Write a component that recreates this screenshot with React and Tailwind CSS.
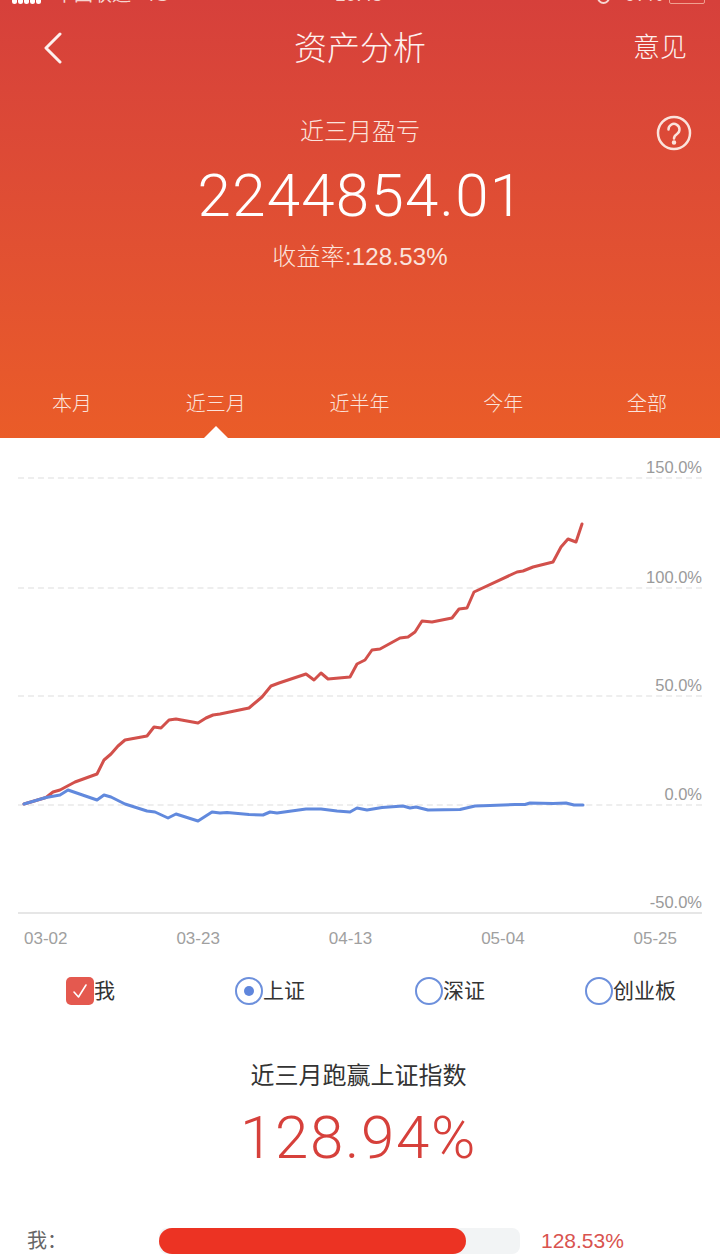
const red = '24,804 46,797.5 53,792 60,790 75,782 97,774 104,760 111,754 118,746 125,740 147,736 154,727 161,728 169,720 176,719 198,723 206,718 213,715 220,714 249,708 262,697 271,686 279,683 306,674 314,680 321,673 328,679 350,677 357,664 365,660 372,650 380,649 400,638 408,637 415,632 422,621 432,622 452,618 459,609 467,608 474,592 517,572 523,571 533,567 553,562 561,547 568,539 576,542 582,524';
const blue = '24,804 46,797.5 60,795 68,790 97,800 104,795 111,797 125,804 147,811 155,812 168,818 176,814 198,821 212,812 220,813 227,812.5 249,814.5 263,815 270,812 277,813 306,809 321,809 337,811 350,812 357,808 367,810 382,807.5 403,806 410,808 416,807 428,810 460,809.5 475,806 490,805.5 515,804.5 525,804.5 530,803 553,803.5 566,803 574,805 583,805';

const tabs = ['本月', '近三月', '近半年', '今年', '全部'];
const gridRows = [
  { label: '150.0%', h: 'h-[41px]' },
  { label: '100.0%', h: 'h-[110px]' },
  { label: '50.0%', h: 'h-[108px]' },
  { label: '0.0%', h: 'h-[109px]' },
];
const dates = ['03-02', '03-23', '04-13', '05-04', '05-25'];

function Radio({ label, checked, className }) {
  return (
    <div className={`flex items-center ${className}`}>
      <span className="w-[28px] h-[28px] rounded-full border-2 border-[#6d90dc] flex items-center justify-center">
        {checked && <span className="w-[10px] h-[10px] rounded-full bg-[#5f86dc]" />}
      </span>
      <span className="text-[21px] text-[#333]">{label}</span>
    </div>
  );
}

export default function App() {
  return (
    <div className="w-[720px] h-[1256px] overflow-hidden bg-white font-['Liberation_Sans','Noto_Sans_CJK_SC',sans-serif]">
      {/* header */}
      <div className="relative h-[438px] bg-gradient-to-b from-[#d6403b] to-[#ea5c28] text-white">
        {/* status bar, cut off by the top of the picture */}
        <div className="h-[4px] overflow-hidden flex items-end pl-[12px] text-[19px] text-[#f6d5d0]">
          <div className="w-[323px] flex items-end leading-none whitespace-nowrap">
            <span className="flex gap-[1px] w-[43px] h-[8px]">
              <span className="w-[5px] h-[8px] rounded-full bg-white" />
              <span className="w-[5px] h-[8px] rounded-full bg-white" />
              <span className="w-[5px] h-[8px] rounded-full bg-white" />
              <span className="w-[5px] h-[8px] rounded-full bg-white" />
              <span className="w-[5px] h-[8px] rounded-full bg-white" />
            </span>
            <span>中国联通</span>
            <span className="ml-[13px]">4G</span>
          </div>
          <span className="w-[262px] leading-none">10:45</span>
          <span className="w-[28px] leading-none">
            <span className="block w-[13px] h-[13px] rounded-full border-2 border-[#f6d5d0]" />
          </span>
          <span className="w-[44px] leading-none">97%</span>
          <span className="w-[36px] h-[10px] border border-[#f0a090] rounded-[2px]" />
        </div>
        <div className="h-[72px] grid grid-cols-[1fr_auto_1fr] items-center pt-[16px]">
          <svg className="ml-[42px]" width="22" height="32" viewBox="0 0 22 32" fill="none" stroke="#fdf0ee" strokeWidth="3" strokeLinecap="round" strokeLinejoin="round">
            <path d="M18 2 L4 16 L18 30" />
          </svg>
          <span className="text-[33px] leading-none font-light text-[#fdf0ee]">资产分析</span>
          <span className="justify-self-end mr-[33px] text-[27px] leading-none font-light text-[#fdf0ee]">意见</span>
        </div>
        <div className="relative mt-[39px] text-center">
          <div className="text-[24px] leading-[34px] font-light text-[#fbe3dc]">近三月盈亏</div>
          <svg className="absolute right-[28px] top-0" width="36" height="36" viewBox="0 0 36 36" fill="none" stroke="#fbe3dc" strokeWidth="2.5">
            <circle cx="18" cy="18" r="16" />
            <path d="M12.5 14.5 a5.5 5.5 0 1 1 8.5 4.5 c-2 1.3 -3 2.3 -3 4.5" strokeLinecap="round" />
            <circle cx="18" cy="27.5" r="1" fill="#fbe3dc" />
          </svg>
          <div className="mt-[13px] pl-[2px] font-['Roboto',sans-serif] font-light text-[60px] tracking-[1.3px] leading-[68px]">2244854.01</div>
          <div className="mt-[10px] text-[24px] leading-[34px] font-light tracking-[0.2px] text-[#fbe3dc]">收益率:128.53%</div>
        </div>
        <div className="absolute left-0 right-0 bottom-[18px] grid grid-cols-5 text-[20px] leading-[32px] font-light text-[#fbe3dc] text-center pr-[1px]">
          {tabs.map((t) => <span key={t}>{t}</span>)}
        </div>
        <span className="absolute left-[204px] bottom-0 w-0 h-0 border-l-[12px] border-r-[12px] border-b-[12px] border-l-transparent border-r-transparent border-b-white" />
      </div>

      {/* chart */}
      <div className="relative h-[620px] px-[18px]">
        <div>
          {gridRows.map((r) => (
            <div key={r.label} className={`${r.h} border-b-2 border-dashed border-[#eeeeee] flex items-end justify-end`}>
              <span className="text-[16.5px] leading-[20px] text-[#9a9a9a]">{r.label}</span>
            </div>
          ))}
          <div className="h-[108px] border-b-2 border-[#e6e6e6] flex items-end justify-end">
            <span className="text-[16.5px] leading-[20px] text-[#9a9a9a]">-50.0%</span>
          </div>
        </div>
        <svg className="absolute left-0 top-[-438px]" width="720" height="1256" fill="none" strokeWidth="3" strokeLinejoin="round" strokeLinecap="round">
          <polyline points={red} stroke="#d2504b" />
          <polyline points={blue} stroke="#6189dd" />
        </svg>
        <div className="flex justify-between pl-[6px] pr-[25px] mt-[14px] text-[17px] leading-[22px] text-[#a0a0a0]">
          {dates.map((d) => <span key={d}>{d}</span>)}
        </div>
        <div className="flex items-center mt-[27px] h-[28px]">
          <div className="flex items-center ml-[48px] w-[169px]">
            <span className="w-[28px] h-[28px] rounded-[5px] bg-[#e4594f] flex items-center justify-center">
              <svg width="18" height="18" viewBox="0 0 18 18" fill="none" stroke="white" strokeWidth="1.6" strokeLinecap="round" strokeLinejoin="round">
                <path d="M3 10 L7.5 15 L15 3" />
              </svg>
            </span>
            <span className="text-[21px] text-[#333]">我</span>
          </div>
          <Radio label="上证" checked className="w-[180px]" />
          <Radio label="深证" className="w-[170px]" />
          <Radio label="创业板" />
        </div>
      </div>

      {/* compare */}
      <div className="text-center pr-[3px] pt-[1px]">
        <div className="text-[24px] leading-[34px] text-[#333]">近三月跑赢上证指数</div>
        <div className="mt-[11px] font-['Roboto',sans-serif] font-light text-[60px] tracking-[1.7px] leading-[68px] text-[#d6403b]">128.94%</div>
      </div>
      <div className="flex items-center mt-[56px] pl-[27px]">
        <span className="w-[132px] text-[20px] leading-[26px] text-[#666]">我：</span>
        <div className="w-[361px] h-[26px] rounded-[8px] bg-[#f2f4f5]">
          <div className="w-[307px] h-full rounded-full bg-[#ec3323]" />
        </div>
        <span className="ml-[21px] text-[21px] leading-[26px] text-[#d9534f]">128.53%</span>
      </div>
    </div>
  );
}
